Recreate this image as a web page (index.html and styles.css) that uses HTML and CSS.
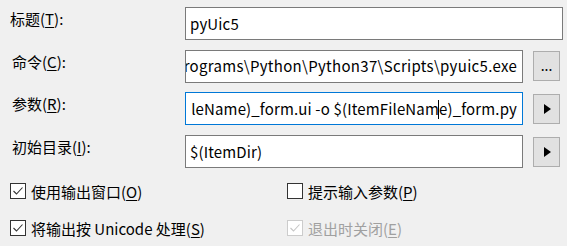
FILE: index.html
```html
<!DOCTYPE html>
<html lang="zh-CN">
<head>
    <meta charset="UTF-8">
    <title>外部工具</title>
    <link rel="stylesheet" href="styles.css">
</head>
<body>

    <div class="tool-form">
        <div class="label">标题(<u>T</u>):</div>
        <div class="field wide"><span>pyUic5</span></div>

        <div class="label">命令(<u>C</u>):</div>
        <div class="field path"><span>Programs\Python\Python37\Scripts\pyuic5.exe</span></div>
        <button class="side-button">...</button>

        <div class="label">参数(<u>R</u>):</div>
        <div class="field focused"><span>leName)_form.ui -o $(ItemFileNam<i class="caret"></i>e)_form.py</span></div>
        <button class="side-button"><svg width="7" height="10" viewBox="0 0 7 10"><path d="M0 0 L7 5 L0 10 Z" fill="#000"/></svg></button>

        <div class="label">初始目录(<u>I</u>):</div>
        <div class="field left"><span>$(ItemDir)</span></div>
        <button class="side-button"><svg width="7" height="10" viewBox="0 0 7 10"><path d="M0 0 L7 5 L0 10 Z" fill="#000"/></svg></button>
    </div>

    <div class="options">
        <label class="check"><span class="box"><svg width="14" height="14" viewBox="0 0 14 14"><path d="M2.5 7 L5.5 10 L11.5 3.5" fill="none" stroke="#333" stroke-width="1.1"/></svg></span><span>使用输出窗口(<u>O</u>)</span></label>
        <label class="check"><span class="box"></span><span>提示输入参数(<u>P</u>)</span></label>
        <label class="check"><span class="box"><svg width="14" height="14" viewBox="0 0 14 14"><path d="M2.5 7 L5.5 10 L11.5 3.5" fill="none" stroke="#333" stroke-width="1.1"/></svg></span><span>将输出按 Unicode 处理(<u>S</u>)</span></label>
        <label class="check disabled"><span class="box"><svg width="14" height="14" viewBox="0 0 14 14"><path d="M2.5 7 L5.5 10 L11.5 3.5" fill="none" stroke="#c6c6c6" stroke-width="1.1"/></svg></span><span>退出时关闭(<u>E</u>)</span></label>
    </div>

</body>
</html>
```

FILE: styles.css
```css
* { margin: 0; padding: 0; box-sizing: border-box; }
body { background: #f0f0f0; color: #000; font-family: "Noto Sans CJK SC", "Noto Sans", sans-serif; font-size: 15px; width: 567px; height: 246px; overflow: hidden; }
u { text-decoration: underline; text-underline-offset: 2px; text-decoration-thickness: 1px; }

.tool-form { display: grid; grid-template-columns: 175px 338px 10px 27px 3px; grid-auto-rows: 33px; row-gap: 9.7px; padding: 7px 0 0 10px; }
.label { grid-column: 1; padding: 2px 0 0 2px; line-height: 20px; }
.label:first-child { padding-left: 0; }

.field { grid-column: 2; background: #fff; border: 1px solid #7a7a7a; display: flex; align-items: center; justify-content: flex-end; padding: 0 5px 1px 4px; overflow: hidden; white-space: nowrap; letter-spacing: 0.15px; }
.field.wide { grid-column: 2 / 6; justify-content: flex-start; }
.field.left { justify-content: flex-start; }
.field.path { letter-spacing: 0.3px; }
.field.focused { border-color: #0078d7; }
.caret { display: inline-block; width: 1px; height: 19px; margin: 0 -0.5px; background: #000; vertical-align: -4px; }

.side-button { grid-column: 4; align-self: center; height: 30px; background: #e1e1e1; border: 1px solid #adadad; font: inherit; font-size: 14px; display: flex; align-items: center; justify-content: center; padding-bottom: 2px; }
.side-button svg { margin: 2px 0 0 1px; }

.options { display: grid; grid-template-columns: 277px 270px; row-gap: 17px; padding: 13px 0 0 10px; }
.check { display: flex; align-items: center; gap: 5px; height: 20px; }
.box { width: 16px; height: 16px; border: 1px solid #333; background: #fff; display: flex; align-items: center; justify-content: center; }
.disabled { color: #a0a0a0; }
.disabled .box { border-color: #ccc; }
```
